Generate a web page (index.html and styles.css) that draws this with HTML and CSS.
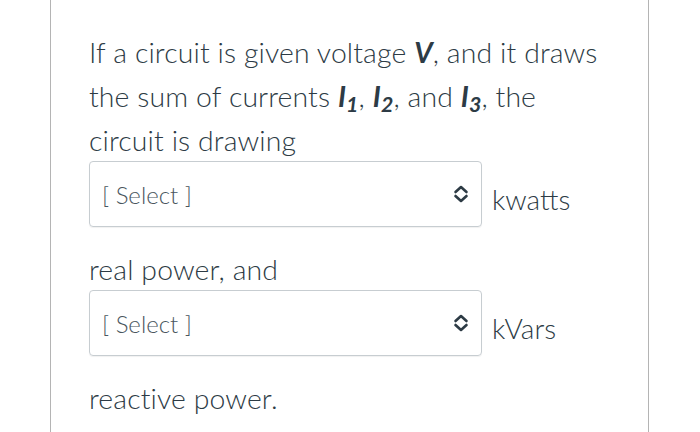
FILE: index.html
```html
<!DOCTYPE html>
<html>
<head>
<meta charset="utf-8">
<link rel="stylesheet" href="styles.css">
</head>
<body>
<div class="frame">
  <div class="question">
    <p class="text">If a circuit is given voltage <b><i>V</i></b>, and it draws the sum of currents <b><i>I<sub>1</sub></i></b>, <b><i>I<sub>2</sub></i></b>, and <b><i>I<sub>3</sub></i></b>, the circuit is drawing</p>
    <div class="row">
      <div class="select">
        <span class="placeholder">[ Select ]</span>
        <svg class="chev" width="16" height="18" viewBox="0 0 16 18"><path d="M2.5 7 L8 2 L13.5 7 M2.5 11 L8 16 L13.5 11" fill="none" stroke="#2d3b45" stroke-width="2.6" stroke-linecap="round" stroke-linejoin="round"/></svg>
      </div>
      <span class="unit">kwatts</span>
    </div>
    <p class="text mid">real power, and</p>
    <div class="row">
      <div class="select">
        <span class="placeholder">[ Select ]</span>
        <svg class="chev" width="16" height="18" viewBox="0 0 16 18"><path d="M2.5 7 L8 2 L13.5 7 M2.5 11 L8 16 L13.5 11" fill="none" stroke="#2d3b45" stroke-width="2.6" stroke-linecap="round" stroke-linejoin="round"/></svg>
      </div>
      <span class="unit">kVars</span>
    </div>
    <p class="text end">reactive power.</p>
  </div>
</div>
</body>
</html>
```
FILE: styles.css
```css
html, body {
  margin: 0;
  padding: 0;
  background: #ffffff;
}
body {
  font-family: Lato, "Open Sans", sans-serif;
  color: #2d3b45;
  height: 432px;
  overflow: hidden;
}
.frame {
  margin-left: 50px;
  width: 597px;
  height: 432px;
  border-left: 1.5px solid #b4b4b4;
  border-right: 1.5px solid #b4b4b4;
  box-sizing: content-box;
}
.question {
  padding: 30px 0 0 38px;
  width: 515px;
}
.text {
  margin: 0;
  font-size: 28.4px;
  line-height: 44px;
  font-weight: 300;
  letter-spacing: 0.12px;
}
.text b {
  font-weight: 700;
}
.text sub {
  font-size: 0.75em;
  line-height: 0;
  vertical-align: -0.22em;
}
.row {
  display: flex;
  align-items: center;
  margin-top: -1px;
}
.select {
  height: 64px;
  border: 1px solid #c7cdd1;
  border-radius: 4px;
  box-shadow: 0 1px 1px rgba(0,0,0,0.06);
  display: flex;
  align-items: center;
  justify-content: space-between;
  padding: 0 12px 0 12px;
  box-sizing: content-box;
  margin-right: 10px;
  width: 367px;
  flex: none;
}
.placeholder {
  font-size: 24px;
  font-weight: 300;
  color: #4a565e;
}
.chev {
  display: block;
}
.unit {
  font-size: 28px;
  font-weight: 300;
  color: #2d3b45;
  position: relative;
  top: 5px;
  white-space: nowrap;
}
.mid {
  margin-top: 20px;
}
.end {
  margin-top: 20px;
}
```
